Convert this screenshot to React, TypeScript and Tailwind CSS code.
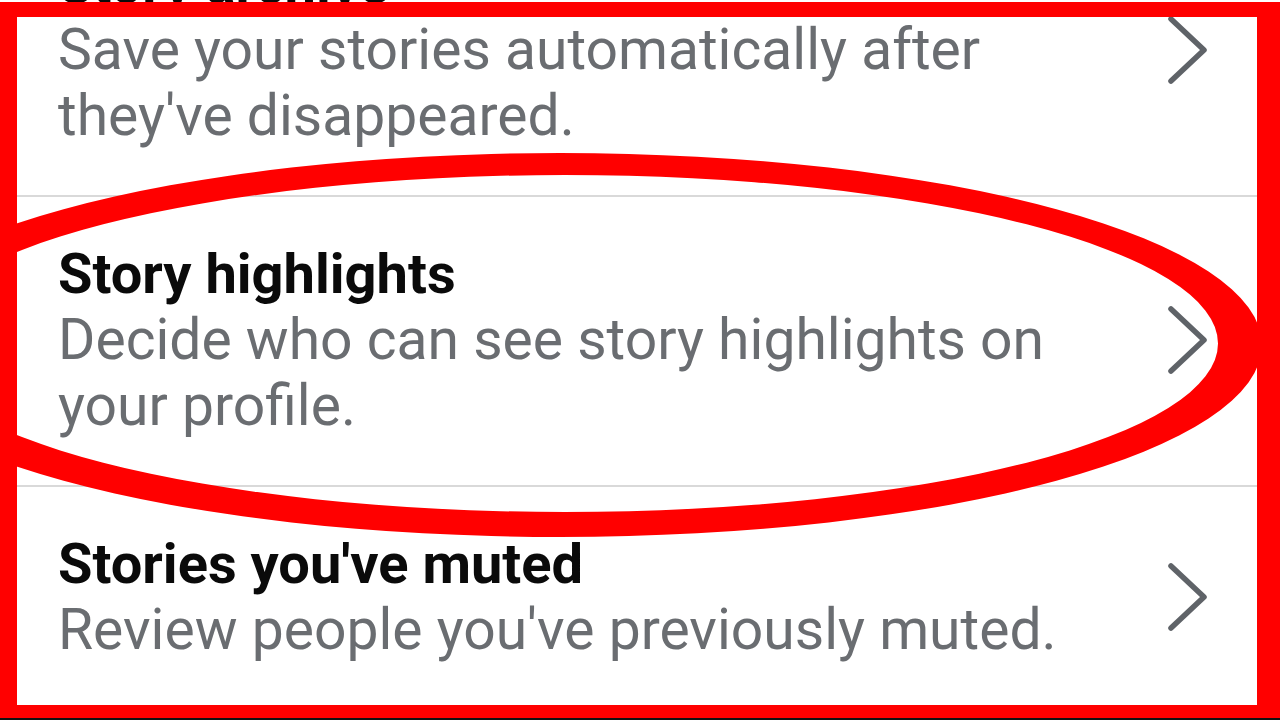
import React from "react";

const items = [
  {
    title: "Story archive",
    sub: "Save your stories automatically after they've disappeared.",
  },
  {
    title: "Story highlights",
    sub: "Decide who can see story highlights on your profile.",
  },
  {
    title: "Stories you've muted",
    sub: "Review people you've previously muted.",
  },
];

function Chevron() {
  return (
    <svg width="44" height="72" viewBox="0 0 44 72" className="shrink-0">
      <polyline
        points="5,5 38,36 5,67"
        fill="none"
        stroke="#5f6368"
        strokeWidth="5.5"
        strokeLinecap="round"
        strokeLinejoin="round"
      />
    </svg>
  );
}

export default function App() {
  return (
    <div className="relative w-[1280px] h-[720px] overflow-hidden bg-[#111111]">
      <div
        className="relative h-[718px] overflow-hidden bg-white"
        style={{ fontFamily: "Roboto, 'Noto Sans', sans-serif" }}
      >
        <div className="-mt-[93px] flex flex-col">
          {items.map((it, i) => (
            <div
              key={i}
              className={
                "flex items-center pl-[58px] pr-[70px] pt-[44px] pb-[46px] " +
                (i < items.length - 1 ? "border-b-2 border-[#d9d9d9]" : "")
              }
            >
              <div className="w-[1085px] flex flex-col">
                <div className="text-[56px] leading-[66px] font-bold text-[#0a0a0a]">
                  {it.title}
                </div>
                <div className="text-[57px] leading-[66px] text-[#6a6d71]">
                  {it.sub}
                </div>
              </div>
              <div className="ml-auto">
                <Chevron />
              </div>
            </div>
          ))}
        </div>
      </div>

      {/* red annotation frame */}
      <div className="pointer-events-none absolute left-0 right-0 top-[2px] h-[716px] border-t-[15px] border-l-[17px] border-r-[23px] border-b-[13px] border-[#ff0000]" />

      {/* red annotation ellipse */}
      <svg
        className="pointer-events-none absolute left-0 top-0"
        width="1280"
        height="720"
        viewBox="0 0 1280 720"
      >
        <path
          fillRule="evenodd"
          fill="#ff0000"
          d="M -142 345 A 702 192 0 1 0 1262 345 A 702 192 0 1 0 -142 345 Z M -88 343.5 A 653 168.5 0 1 0 1218 343.5 A 653 168.5 0 1 0 -88 343.5 Z"
        />
      </svg>
    </div>
  );
}
